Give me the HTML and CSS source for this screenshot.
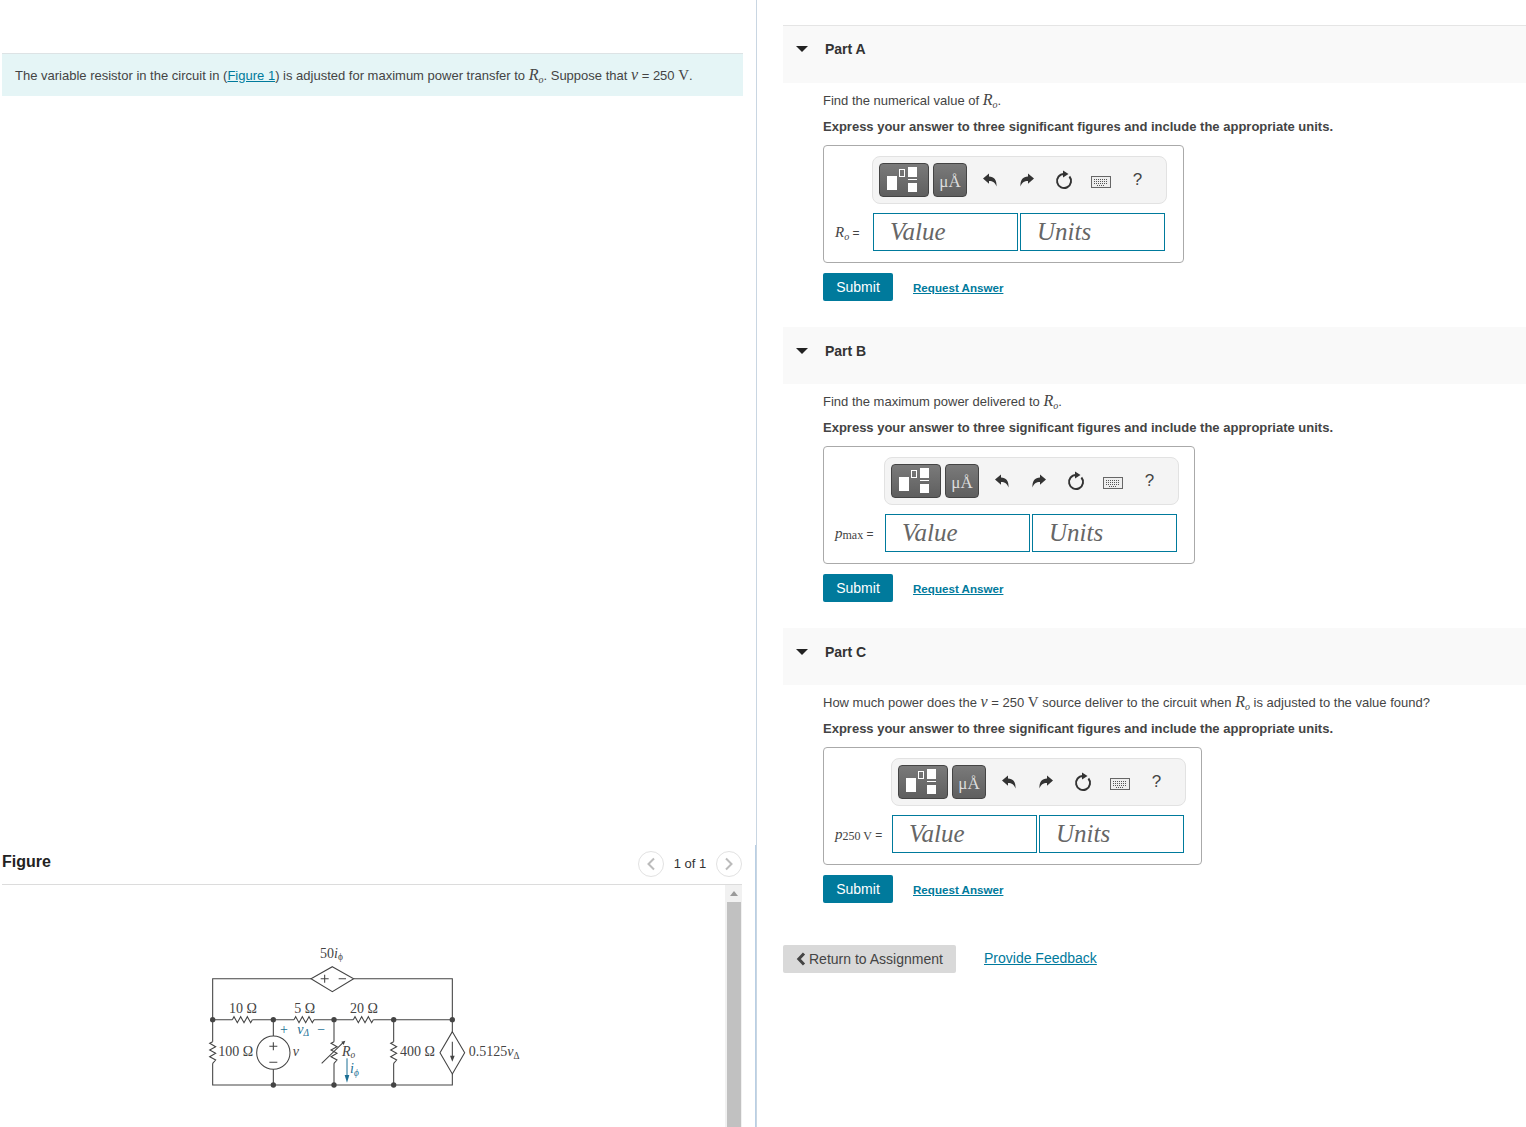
FILE: index.html
```html
<!DOCTYPE html>
<html lang="en">
<head>
<meta charset="utf-8">
<title>Assignment</title>
<link rel="stylesheet" href="styles.css">
</head>
<body>
<div class="page">
  <aside class="left">
    <div class="problem">
      <p>The variable resistor in the circuit in (<a href="#">Figure 1</a>) is adjusted for maximum power transfer to <span class="m">R<sub>o</sub></span>. Suppose that <span class="m">v</span> = 250 <span class="mu">V</span>.</p>
    </div>
    <div class="figure-head">
      <h2>Figure</h2>
      <div class="pager">
        <span class="pg-btn"><svg width="10" height="14" viewBox="0 0 10 14"><path d="M8 1.5 2.5 7 8 12.5" fill="none" stroke="#bbb" stroke-width="2"/></svg></span>
        <span class="pg-text">1 of 1</span>
        <span class="pg-btn"><svg width="10" height="14" viewBox="0 0 10 14"><path d="M2 1.5 7.5 7 2 12.5" fill="none" stroke="#bbb" stroke-width="2"/></svg></span>
      </div>
    </div>
    <div class="figure-pane">
      <div class="figure-canvas">
        <svg class="circuit" width="340" height="165" viewBox="0 0 1020 495">
          <g fill="none" stroke="#444" stroke-width="3.2">
            <path d="M333 131H38V254M461 131H757V290M38 254H97M157 254H282M342 254H460M520 254H757M38 254V320M38 385V450H757V417M220 254V303M220 403V450M402 254V320M402 385V450M581 254V320M581 385V450"/>
            <path d="M97 254l5 -9 10 18 10 -18 10 18 10 -18 10 18 5 -9M282 254l5 -9 10 18 10 -18 10 18 10 -18 10 18 5 -9M460 254l5 -9 10 18 10 -18 10 18 10 -18 10 18 5 -9"/>
            <path d="M38 320l-9 5 18 10 -18 10 18 10 -18 10 18 10 -9 10M402 320l-9 5 18 10 -18 10 18 10 -18 10 18 10 -9 10M581 320l-9 5 18 10 -18 10 18 10 -18 10 18 10 -9 10"/>
            <path d="M397 95 461 131 397 170 333 131Z"/>
            <path d="M757 290 794 353 757 417 720 353Z"/>
            <circle cx="220" cy="353" r="50"/>
            <path d="M365 385 430 322M220 322V346M208 334H232M208 382H232M362 131H386M374 119V143M416 131H438"/>
            <path d="M757 320V365"/>
          </g>
          <path d="M424 320 436 317 431 330Z" fill="#444"/>
          <path d="M750 362H764L757 380Z" fill="#444"/>
          <path d="M441 370V425" stroke="#1b6f94" stroke-width="3"/>
          <path d="M434 420H448L441 443Z" fill="#1b6f94"/>
          <g fill="#444">
            <circle cx="38" cy="254" r="8"/><circle cx="220" cy="254" r="8"/><circle cx="402" cy="254" r="8"/><circle cx="581" cy="254" r="8"/><circle cx="757" cy="254" r="8"/><circle cx="220" cy="450" r="8"/><circle cx="402" cy="450" r="8"/><circle cx="581" cy="450" r="8"/>
          </g>
          <g class="ct">
            <text x="360" y="68">50<tspan class="ci">i</tspan><tspan class="cs" dy="8">ϕ</tspan></text>
            <text x="87" y="233">10 Ω</text>
            <text x="283" y="233">5 Ω</text>
            <text x="450" y="233">20 Ω</text>
            <text x="55" y="364">100 Ω</text>
            <text x="278" y="362" class="ci">v</text>
            <text x="426" y="362" class="ci">R<tspan class="cs" dy="8">o</tspan></text>
            <text x="600" y="364">400 Ω</text>
            <text x="806" y="364">0.5125<tspan class="ci">v</tspan><tspan class="cs" dy="8">Δ</tspan></text>
          </g>
          <g class="ct cb">
            <text x="240" y="298">+</text>
            <text x="292" y="296" class="ci">v<tspan class="cs" dy="8">Δ</tspan></text>
            <text x="352" y="296">−</text>
            <text x="450" y="415" class="ci">i<tspan class="cs" dy="8">ϕ</tspan></text>
          </g>
        </svg>
      </div>
      <div class="scrollbar"><span class="sb-up"></span><span class="sb-thumb"></span></div>
    </div>
  </aside>
  <main class="right">
    <section class="part part-first">
      <header class="part-head"><span class="caret"></span><h3>Part A</h3></header>
      <div class="part-body">
        <p class="q">Find the numerical value of <span class="m">R<sub>o</sub></span>.</p>
        <p class="ins">Express your answer to three significant figures and include the appropriate units.</p>
        <div class="answer answer-a">
          <span class="lbl lbl-a"><span class="m">R<sub>o</sub></span> =</span>
          <div class="toolbar">
            <span class="tbtn tbtn-wide"><svg width="38" height="28" viewBox="0 0 38 28"><rect x="2" y="10" width="10" height="14" fill="#fff"/><rect x="14.5" y="3.5" width="5" height="7" fill="none" stroke="#fff"/><rect x="23" y="1" width="9" height="10" fill="#fff"/><rect x="23" y="13" width="9" height="1" fill="#fff"/><rect x="23" y="17" width="9" height="9" fill="#fff"/></svg></span>
            <span class="tbtn tbtn-unit">μÅ</span>
            <span class="ticon"><svg width="16" height="16" viewBox="0 0 16 16"><path d="M1 6.5 7 1.5V4.5C12 4.5 15 8 14.5 14.5 13 10.5 11 9 7 9V11.8Z" fill="#333"/></svg></span>
            <span class="ticon"><svg width="16" height="16" viewBox="0 0 16 16"><path d="M15 6.5 9 1.5V4.5C4 4.5 1 8 1.5 14.5 3 10.5 5 9 9 9V11.8Z" fill="#333"/></svg></span>
            <span class="ticon"><svg width="18" height="20" viewBox="0 0 18 20"><path d="M14.4 6.5A7 7 0 1 1 9 4" fill="none" stroke="#333" stroke-width="2"/><path d="M8 .5 13.5 4 8 7.5Z" fill="#333"/></svg></span>
            <span class="ticon tkey"><svg width="20" height="12" viewBox="0 0 20 12"><rect x=".5" y=".5" width="19" height="11" fill="#eee" stroke="#666"/><path d="M3 3.5H17M3 5.5H17M3 7.5H17M6 9.5H14" stroke="#555" stroke-dasharray="1 1"/></svg></span>
            <span class="ticon thelp">?</span>
          </div>
          <div class="inputs"><span class="field">Value</span><span class="field">Units</span></div>
        </div>
        <div class="actions"><button class="submit">Submit</button><a class="req" href="#">Request Answer</a></div>
      </div>
    </section>
    <section class="part">
      <header class="part-head"><span class="caret"></span><h3>Part B</h3></header>
      <div class="part-body">
        <p class="q">Find the maximum power delivered to <span class="m">R<sub>o</sub></span>.</p>
        <p class="ins">Express your answer to three significant figures and include the appropriate units.</p>
        <div class="answer">
          <span class="lbl lbl-b"><span class="m">p</span><span class="lsub">max</span> =</span>
          <div class="toolbar">
            <span class="tbtn tbtn-wide"><svg width="38" height="28" viewBox="0 0 38 28"><rect x="2" y="10" width="10" height="14" fill="#fff"/><rect x="14.5" y="3.5" width="5" height="7" fill="none" stroke="#fff"/><rect x="23" y="1" width="9" height="10" fill="#fff"/><rect x="23" y="13" width="9" height="1" fill="#fff"/><rect x="23" y="17" width="9" height="9" fill="#fff"/></svg></span>
            <span class="tbtn tbtn-unit">μÅ</span>
            <span class="ticon"><svg width="16" height="16" viewBox="0 0 16 16"><path d="M1 6.5 7 1.5V4.5C12 4.5 15 8 14.5 14.5 13 10.5 11 9 7 9V11.8Z" fill="#333"/></svg></span>
            <span class="ticon"><svg width="16" height="16" viewBox="0 0 16 16"><path d="M15 6.5 9 1.5V4.5C4 4.5 1 8 1.5 14.5 3 10.5 5 9 9 9V11.8Z" fill="#333"/></svg></span>
            <span class="ticon"><svg width="18" height="20" viewBox="0 0 18 20"><path d="M14.4 6.5A7 7 0 1 1 9 4" fill="none" stroke="#333" stroke-width="2"/><path d="M8 .5 13.5 4 8 7.5Z" fill="#333"/></svg></span>
            <span class="ticon tkey"><svg width="20" height="12" viewBox="0 0 20 12"><rect x=".5" y=".5" width="19" height="11" fill="#eee" stroke="#666"/><path d="M3 3.5H17M3 5.5H17M3 7.5H17M6 9.5H14" stroke="#555" stroke-dasharray="1 1"/></svg></span>
            <span class="ticon thelp">?</span>
          </div>
          <div class="inputs"><span class="field">Value</span><span class="field">Units</span></div>
        </div>
        <div class="actions"><button class="submit">Submit</button><a class="req" href="#">Request Answer</a></div>
      </div>
    </section>
    <section class="part">
      <header class="part-head"><span class="caret"></span><h3>Part C</h3></header>
      <div class="part-body">
        <p class="q">How much power does the <span class="m">v</span> = 250 <span class="mu">V</span> source deliver to the circuit when <span class="m">R<sub>o</sub></span> is adjusted to the value found?</p>
        <p class="ins">Express your answer to three significant figures and include the appropriate units.</p>
        <div class="answer">
          <span class="lbl lbl-c"><span class="m">p</span><span class="lsub">250 V</span> =</span>
          <div class="toolbar">
            <span class="tbtn tbtn-wide"><svg width="38" height="28" viewBox="0 0 38 28"><rect x="2" y="10" width="10" height="14" fill="#fff"/><rect x="14.5" y="3.5" width="5" height="7" fill="none" stroke="#fff"/><rect x="23" y="1" width="9" height="10" fill="#fff"/><rect x="23" y="13" width="9" height="1" fill="#fff"/><rect x="23" y="17" width="9" height="9" fill="#fff"/></svg></span>
            <span class="tbtn tbtn-unit">μÅ</span>
            <span class="ticon"><svg width="16" height="16" viewBox="0 0 16 16"><path d="M1 6.5 7 1.5V4.5C12 4.5 15 8 14.5 14.5 13 10.5 11 9 7 9V11.8Z" fill="#333"/></svg></span>
            <span class="ticon"><svg width="16" height="16" viewBox="0 0 16 16"><path d="M15 6.5 9 1.5V4.5C4 4.5 1 8 1.5 14.5 3 10.5 5 9 9 9V11.8Z" fill="#333"/></svg></span>
            <span class="ticon"><svg width="18" height="20" viewBox="0 0 18 20"><path d="M14.4 6.5A7 7 0 1 1 9 4" fill="none" stroke="#333" stroke-width="2"/><path d="M8 .5 13.5 4 8 7.5Z" fill="#333"/></svg></span>
            <span class="ticon tkey"><svg width="20" height="12" viewBox="0 0 20 12"><rect x=".5" y=".5" width="19" height="11" fill="#eee" stroke="#666"/><path d="M3 3.5H17M3 5.5H17M3 7.5H17M6 9.5H14" stroke="#555" stroke-dasharray="1 1"/></svg></span>
            <span class="ticon thelp">?</span>
          </div>
          <div class="inputs"><span class="field">Value</span><span class="field">Units</span></div>
        </div>
        <div class="actions"><button class="submit">Submit</button><a class="req" href="#">Request Answer</a></div>
      </div>
    </section>
    <footer class="foot">
      <button class="return"><svg width="10" height="14" viewBox="0 0 10 14"><path d="M8 1.5 2.8 7 8 12.5" fill="none" stroke="#444" stroke-width="3"/></svg>Return to Assignment</button>
      <a class="feedback" href="#">Provide Feedback</a>
    </footer>
  </main>
</div>
</body>
</html>
```
FILE: styles.css
```css
* { box-sizing: border-box; }
html, body { margin: 0; padding: 0; height: 100%; overflow: hidden; background: #fff; }
body { font-family: "Liberation Sans", Arial, sans-serif; font-size: 13px; color: #333; }
a { color: #007a9c; }
p, h2, h3 { margin: 0; }

.page { display: flex; height: 1127px; }

.left { position: relative; width: 757px; flex: none; height: 1127px; padding: 53px 13px 0 2px; border-right: 1px solid #c9d6e2; display: flex; flex-direction: column; overflow: hidden; }
.left::after { content: ""; position: absolute; right: -1px; top: 845px; bottom: 0; width: 2px; background: #b9cfe4; }

.problem { height: 43px; background: #e5f5f6; border-top: 1px solid #dde3e5; padding: 0 13px; display: flex; align-items: center; line-height: 41px; }
.problem p { white-space: nowrap; color: #444; }

.m { font-family: "Liberation Serif", serif; font-style: italic; font-size: 16px; }
.m sub { font-size: 10px; line-height: 0; vertical-align: -3px; }
.mu { font-family: "Liberation Serif", serif; font-size: 15px; }

.figure-head { margin-top: 746px; margin-right: 1px; height: 43px; flex: none; display: flex; justify-content: space-between; border-bottom: 1px solid #dcdcdc; align-items: flex-start; }
.figure-head h2 { font-size: 16px; font-weight: bold; color: #222; margin-top: 11px; line-height: 18px; }

.pager { display: flex; align-items: center; margin-top: 9px; }
.pg-btn { width: 26px; height: 26px; border: 1px solid #e2e2e2; border-radius: 50%; display: flex; align-items: center; justify-content: center; }
.pg-text { width: 52px; text-align: center; font-size: 13px; color: #333; line-height: 26px; }

.figure-pane { flex: 1; display: flex; min-height: 0; margin-right: 1px; }
.figure-canvas { flex: 1; padding: 50px 0 0 198px; }
.circuit { display: block; }

.ct text { font-family: "Liberation Serif", serif; font-size: 42px; fill: #444; }
.ct .ci { font-style: italic; }
.ct .cs { font-size: 28px; }
.cb text { fill: #1b6f94; }

.scrollbar { width: 17px; flex: none; background: #f1f1f1; display: flex; flex-direction: column; align-items: center; padding: 0 1px 0 2px; }
.sb-up { height: 17px; flex: none; position: relative; width: 100%; }
.sb-up::after { content: ""; position: absolute; left: 3px; top: 6px; border-left: 4px solid transparent; border-right: 4px solid transparent; border-bottom: 5px solid #9a9a9a; }
.sb-thumb { flex: 1; width: 100%; background: #c1c1c1; }

.right { flex: 1; padding: 25px 0 0 26px; min-width: 0; }
.part { height: 301px; }
.part-first { height: 302px; }
.part-head { height: 57px; background: #f9f9f9; display: flex; padding: 15px 0 0 13px; }
.part-first .part-head { height: 58px; border-top: 1px solid #e5e5e5; padding-top: 14px; }
.caret { width: 0; height: 0; border-left: 6px solid transparent; border-right: 6px solid transparent; border-top: 6px solid #222; margin-top: 6px; }
.part-head h3 { font-size: 14px; font-weight: bold; color: #333; margin-left: 17px; line-height: 18px; }

.part-body { padding: 7px 0 0 40px; }
.q { line-height: 20px; height: 20px; white-space: nowrap; color: #444; }
.ins { font-weight: bold; font-size: 13px; line-height: 18px; margin-top: 8px; color: #444; white-space: nowrap; }

.answer { display: inline-grid; grid-template-columns: auto auto; grid-template-rows: 48px 38px; row-gap: 9px; margin-top: 9px; padding: 10px 15px 11px 11px; border: 1px solid #aaa; border-radius: 4px; align-items: center; vertical-align: top; }
.answer-a { padding-right: 16px; }
.lbl { grid-column: 1; grid-row: 2; font-size: 12px; white-space: nowrap; color: #444; }
.lbl-a { width: 38px; }
.lbl-b { width: 50px; }
.lbl-c { width: 57px; }
.lsub { font-family: "Liberation Serif", serif; font-size: 12px; position: relative; top: 1px; }
.lbl .m { font-size: 15px; }

.toolbar { grid-column: 2; grid-row: 1; width: 295px; height: 48px; margin-left: -1px; background: #f4f4f4; border: 1px solid #e2e2e2; border-radius: 8px; display: flex; align-items: center; padding-left: 6px; }
.tbtn { height: 34px; border: 1px solid #444; border-radius: 4px; background: linear-gradient(#7a7a7a, #5f5f5f); display: flex; align-items: center; justify-content: center; color: #ddd; flex: none; }
.tbtn-wide { width: 50px; margin-right: 4px; }
.tbtn-unit { width: 34px; font-family: "Liberation Serif", serif; font-size: 17px; padding-top: 3px; margin-right: 4px; }
.ticon { width: 37px; flex: none; display: flex; align-items: center; justify-content: center; }
.tkey { padding-top: 3px; }
.thelp { font-size: 17px; color: #444; }

.inputs { grid-column: 2; grid-row: 2; display: flex; gap: 2px; }
.field { width: 145px; height: 38px; border: 1px solid #007a9c; background: #fff; padding-left: 16px; font-family: "Liberation Serif", serif; font-style: italic; font-size: 25px; line-height: 36px; color: #666; }

.actions { display: flex; align-items: flex-start; margin-top: 10px; }
.submit { width: 70px; height: 28px; background: #007a9c; color: #fff; border: 0; border-radius: 2px; font: 14px "Liberation Sans", Arial, sans-serif; padding: 0; }
.req { font-weight: bold; font-size: 11.6px; margin-left: 20px; margin-top: 7px; line-height: 15px; }

.foot { display: flex; align-items: flex-start; margin-top: 16px; }
.return { width: 173px; height: 28px; background: #d9d9d9; border: 0; border-radius: 2px; color: #444; font: 14px "Liberation Sans", Arial, sans-serif; padding: 0 0 0 13px; display: flex; align-items: center; gap: 3px; }
.feedback { font-size: 14px; margin-left: 28px; margin-top: 5px; line-height: 17px; }
```
